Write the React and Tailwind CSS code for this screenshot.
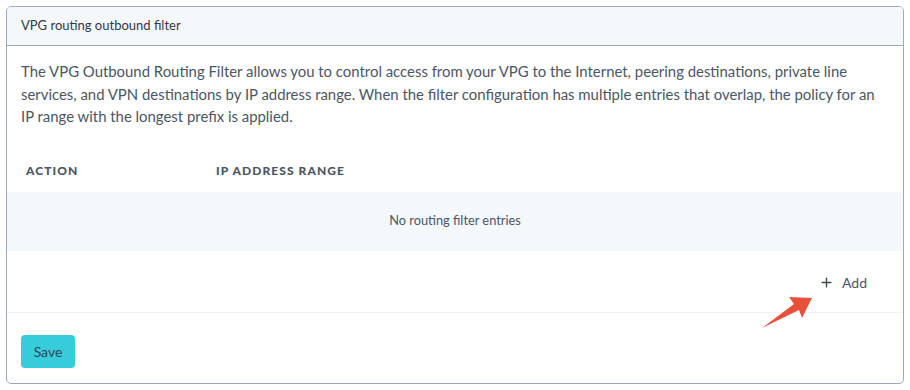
import React from 'react';
import { Plus } from 'lucide-react';

const App = () => {
  return (
    <div className="w-[910px] h-[390px] bg-white pt-[6px] px-[6px]" style={{ fontFamily: 'Lato, "Noto Sans", sans-serif' }}>
      <div className="relative w-[898px] h-[378px] border border-[#9aabbd] rounded-[5px] overflow-hidden">
        <div className="h-[39px] bg-[#f5f8fb] border-b border-[#9aabbd] flex items-center px-[14px]">
          <span className="text-[13px] text-[#2f3a46]">VPG routing outbound filter</span>
        </div>

        <p className="px-[14px] pt-[14px] text-[14.9px] leading-[22.5px] text-[#4b5664] whitespace-nowrap">
          The VPG Outbound Routing Filter allows you to control access from your VPG to the Internet, peering destinations, private line
          <br />
          services, and VPN destinations by IP address range. When the filter configuration has multiple entries that overlap, the policy for an
          <br />
          IP range with the longest prefix is applied.
        </p>

        <div className="mt-[22px]">
          <div className="h-[42px] flex items-center text-[12px] font-black tracking-[0.09em] text-[#4b5664]">
            <div className="w-[209px] pl-[19px]">ACTION</div>
            <div>IP ADDRESS RANGE</div>
          </div>
          <div className="h-[59px] bg-[#f5f8fb] flex items-center justify-center">
            <span className="text-[12.8px] text-[#4b5664]">No routing filter entries</span>
          </div>
          <div className="h-[62px] border-b border-[#eef1f4] flex items-center justify-end pr-[36px] pt-[2px]">
            <button className="flex items-center gap-[8px] text-[14px] text-[#4b5664]">
              <Plus className="w-[15px] h-[15px] text-[#3f4a57]" strokeWidth={2.2} />
              Add
            </button>
          </div>
        </div>

        <div className="px-[14px] pt-[22px]">
          <button className="w-[54px] h-[33px] rounded-[4px] bg-[#36ccd9] text-[14px] text-[#33475b]">Save</button>
        </div>

        <svg className="absolute left-[748px] top-[285px]" width="64" height="44" viewBox="0 0 64 44">
          <path d="M7 36 L39 12 L34 5 L57 6 L47 26 L44 18 Z" fill="#e8503c" />
        </svg>
      </div>
    </div>
  );
};

export default App;
